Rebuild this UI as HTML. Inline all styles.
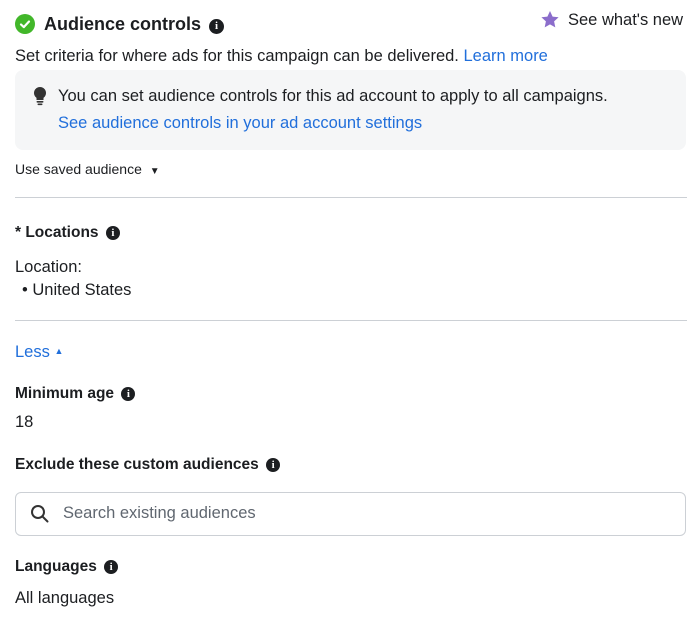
<!DOCTYPE html>
<html><head><style>
body{margin:0;width:700px;height:623px;background:#fff;font-family:"Liberation Sans",Arial,sans-serif;color:#1c1e21;position:relative;overflow:hidden}
.a{position:absolute;white-space:nowrap}
.r{font-size:16.5px}
.b{font-weight:bold;font-size:15.5px}
.l{color:#216fdb}
.i{display:inline-block;width:14px;height:14px;border-radius:50%;background:#1c1e21;color:#fff;font-size:11px;font-weight:bold;text-align:center;line-height:14px;font-family:"Liberation Serif",serif;vertical-align:1px;margin-left:3px}
hr{position:absolute;left:15px;width:672px;border:0;border-top:1px solid #ccd0d5;margin:0}
</style></head><body>
<svg class="a" style="left:15px;top:14px" width="20" height="20"><circle cx="10" cy="10" r="10" fill="#42b72a"/><path d="M6 10.5l2.8 2.6L14 7.5" stroke="#fff" stroke-width="2.2" fill="none" stroke-linecap="round" stroke-linejoin="round"/></svg>
<div class="a" style="left:44px;top:14px;font-size:18px;font-weight:bold">Audience controls <span class="i" style="width:15px;height:15px;line-height:15px;margin-left:3px">i</span></div>
<svg class="a" style="left:540px;top:10px" width="20" height="20"><path d="M10 1l2.6 5.6 6 .7-4.5 4.1 1.2 6L10 14.4 4.7 17.4l1.2-6L1.4 7.3l6-.7z" fill="#8b6dcb"/></svg>
<div class="a r" style="left:568px;top:11px">See what's new</div>
<div class="a r" style="left:15px;top:47px">Set criteria for where ads for this campaign can be delivered. <span class="l">Learn more</span></div>
<div class="a" style="left:15px;top:70px;width:671px;height:80px;background:#f5f6f7;border-radius:8px"></div>
<svg class="a" style="left:32px;top:86px" width="16" height="20"><path d="M8 1a6 6 0 0 0-3.5 10.9V14h7v-2.1A6 6 0 0 0 8 1z" fill="#333"/><rect x="4.5" y="15" width="7" height="1.6" rx=".8" fill="#333"/><rect x="5.5" y="17.5" width="5" height="1.6" rx=".8" fill="#333"/></svg>
<div class="a r" style="left:58px;top:87px">You can set audience controls for this ad account to apply to all campaigns.</div>
<div class="a l r" style="left:58px;top:114px">See audience controls in your ad account settings</div>
<div class="a" style="left:15px;top:161px;font-size:14px">Use saved audience <span style="font-size:10px;margin-left:4px">▼</span></div>
<hr style="top:197px">
<div class="a b" style="left:15px;top:224px">* Locations <span class="i">i</span></div>
<div class="a r" style="left:15px;top:258px">Location:</div>
<div class="a r" style="left:22px;top:281px">• United States</div>
<hr style="top:320px">
<div class="a l r" style="left:15px;top:343px">Less <span style="font-size:9px;vertical-align:3px">▲</span></div>
<div class="a b" style="left:15px;top:385px">Minimum age <span class="i">i</span></div>
<div class="a r" style="left:15px;top:413px">18</div>
<div class="a b" style="left:15px;top:456px">Exclude these custom audiences <span class="i">i</span></div>
<div class="a" style="left:15px;top:492px;width:669px;height:42px;border:1px solid #ccd0d5;border-radius:6px"></div>
<svg class="a" style="left:30px;top:504px" width="20" height="20"><circle cx="8" cy="8" r="6" stroke="#333" stroke-width="2" fill="none"/><path d="M12.5 12.5l5 5" stroke="#333" stroke-width="2" stroke-linecap="round"/></svg>
<div class="a r" style="left:63px;top:504px;color:#606770">Search existing audiences</div>
<div class="a b" style="left:15px;top:558px">Languages <span class="i">i</span></div>
<div class="a r" style="left:15px;top:589px">All languages</div>
</body></html>
